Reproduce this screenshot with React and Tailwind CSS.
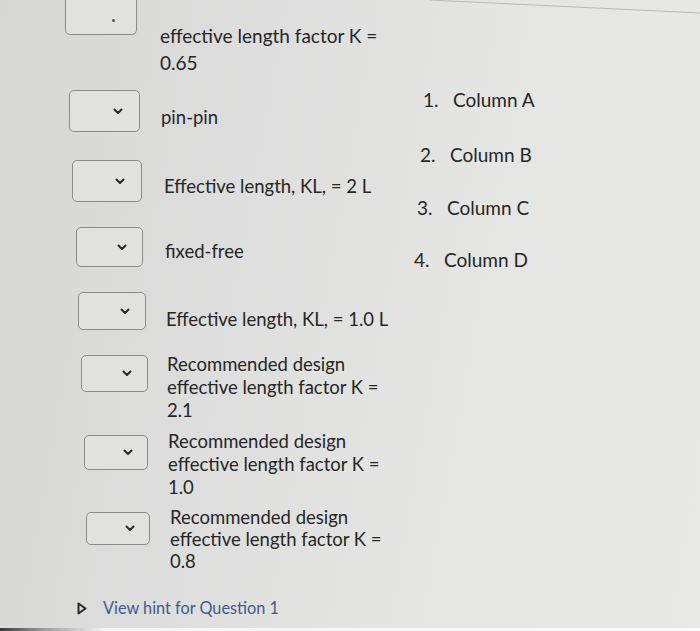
import React from "react";

function Chevron() {
  return (
    <svg width="10" height="7" viewBox="0 0 10 7" fill="none">
      <path d="M1.5 1.5 L5 5 L8.5 1.5" stroke="#2a2a2a" strokeWidth="2" strokeLinecap="round" strokeLinejoin="round" />
    </svg>
  );
}

function SelectBox({ cls, dot }) {
  return (
    <div className={"shrink-0 flex justify-end rounded-[5px] border-[1.5px] border-[#8b8b8b] bg-[#e1e1df] " + (dot ? "items-end pb-[12px] " : "items-center ") + cls}>
      {dot ? <span className="block w-[3px] h-[3px] rounded-full bg-[#555]" /> : <Chevron />}
    </div>
  );
}

const rows = [
  { row: "h-[97px]", box: "ml-[65px] w-[72px] h-[42px] pr-[21px]", dot: true, text: "ml-[23px] mt-[29px] leading-[27px] text-[19px]", lines: ["effective length factor K =", "0.65"] },
  { row: "h-[70px]", box: "ml-[69px] w-[71px] h-[42px] pr-[16px]", text: "ml-[21px] mt-[15px] leading-[24px] text-[18.5px]", lines: ["pin-pin"] },
  { row: "h-[67px]", box: "ml-[72px] w-[70px] h-[42px] pr-[16px]", text: "ml-[22px] mt-[14px] leading-[24px] text-[18.5px]", lines: ["Effective length, KL, = 2 L"] },
  { row: "h-[65px]", box: "ml-[76px] w-[67px] h-[40px] pr-[15px]", text: "ml-[22px] mt-[12px] leading-[24px] text-[18.5px]", lines: ["fixed-free"] },
  { row: "h-[61px]", box: "ml-[78px] w-[68px] h-[38px] pr-[15px]", text: "ml-[20px] mt-[15px] leading-[24px] text-[18.5px]", lines: ["Effective length, KL, = 1.0 L"] },
  { row: "h-[77px]", box: "ml-[81px] w-[67px] h-[37px] mt-[2px] pr-[15px]", text: "ml-[19px] mt-0 leading-[23px] text-[18.5px]", lines: ["Recommended design", "effective length factor K =", "2.1"] },
  { row: "h-[76px]", box: "ml-[84px] w-[64px] h-[35px] mt-[5px] pr-[14px]", text: "ml-[20px] mt-0 leading-[23px] text-[18.5px]", lines: ["Recommended design", "effective length factor K =", "1.0"] },
  { row: "h-[84px]", box: "ml-[86px] w-[64px] h-[33px] mt-[6px] pr-[14px]", text: "ml-[20px] mt-0 leading-[22px] text-[18.5px]", lines: ["Recommended design", "effective length factor K =", "0.8"] },
];

const columns = [
  { n: "1.", label: "Column A", cls: "ml-[23px] mt-[88px]" },
  { n: "2.", label: "Column B", cls: "ml-[20px] mt-[31px]" },
  { n: "3.", label: "Column C", cls: "ml-[17px] mt-[29px]" },
  { n: "4.", label: "Column D", cls: "ml-[14px] mt-[28px]" },
];

export default function App() {
  return (
    <div className="relative w-[700px] h-[631px] overflow-hidden bg-[linear-gradient(100deg,#d6d6d4_0%,#dedede_35%,#e5e5e3_65%,#e9e9e7_100%)] font-['Lato','Liberation_Sans',sans-serif] text-[#262626]">
      <div className="flex">
        <div className="w-[400px] shrink-0 mt-[-7px] flex flex-col">
          {rows.map((r, i) => (
            <div key={i} className={"flex items-start " + r.row}>
              <SelectBox cls={r.box} dot={r.dot} />
              <div className={"whitespace-nowrap " + r.text}>
                {r.lines.map((l, j) => (
                  <div key={j}>{l}</div>
                ))}
              </div>
            </div>
          ))}
          <div className="flex items-center ml-[77px] mt-[6px] h-[24px]">
            <svg width="10" height="13" viewBox="0 0 10 13" fill="none">
              <path d="M1.5 1.5 L8.5 6.5 L1.5 11.5 Z" stroke="#2a2a2a" strokeWidth="2" strokeLinejoin="round" />
            </svg>
            <span className="ml-[16px] text-[16.3px] text-[#3f5b8e]">View hint for Question 1</span>
          </div>
        </div>
        <div className="flex flex-col">
          {columns.map((c, i) => (
            <div key={i} className={"flex text-[19px] leading-[24px] " + c.cls}>
              <span className="w-[30px]">{c.n}</span>
              <span>{c.label}</span>
            </div>
          ))}
        </div>
      </div>
      <svg className="absolute top-0 left-0 pointer-events-none" width="700" height="20">
        <line x1="430" y1="0" x2="700" y2="13" stroke="#b9b9b7" strokeWidth="1" />
      </svg>
      <div className="absolute left-0 right-0 bottom-0 h-[3px] bg-[linear-gradient(90deg,#3a3a3a_0%,#9a9a9a_6%,#f4f4f4_15%,#fafafa_100%)]" />
    </div>
  );
}
